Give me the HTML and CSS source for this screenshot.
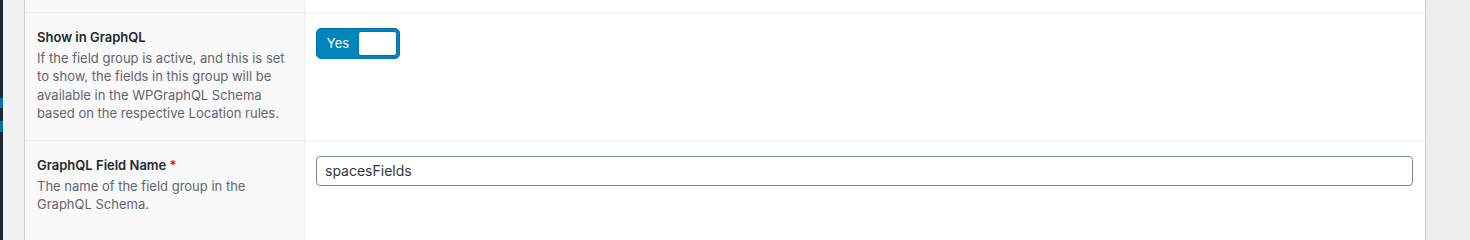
FILE: index.html
```html
<!DOCTYPE html>
<html lang="en">
<head>
<meta charset="utf-8">
<title>Field group settings</title>
<link rel="stylesheet" href="styles.css">
</head>
<body>
<div class="page">
  <div class="adminmenu">
    <div class="seg dark s1"></div>
    <div class="seg blue s2"></div>
    <div class="seg dark s3"></div>
    <div class="seg blue s4"></div>
    <div class="seg dark s5"></div>
  </div>
  <div class="gutter"></div>
  <div class="postbox">
    <div class="row row-partial">
      <div class="label-col"></div>
      <div class="field-col"></div>
    </div>
    <div class="row">
      <div class="label-col">
        <label class="label">Show in GraphQL</label>
        <p class="description">If the field group is active, and this is set to show, the fields in this group will be available in the WPGraphQL Schema based on the respective Location rules.</p>
      </div>
      <div class="field-col">
        <div class="switch">
          <span class="switch-on">Yes</span>
          <span class="switch-off">No</span>
          <div class="switch-slider"></div>
        </div>
      </div>
    </div>
    <div class="row row-last">
      <div class="label-col">
        <label class="label">GraphQL Field Name <span class="required">*</span></label>
        <p class="description">The name of the field group in the GraphQL Schema.</p>
      </div>
      <div class="field-col">
        <input class="text-input" type="text" value="spacesFields">
      </div>
    </div>
  </div>
  <div class="rightside"></div>
</div>
</body>
</html>
```

FILE: styles.css
```css
html, body {
  margin: 0;
  padding: 0;
}
body {
  background: #f1f1f1;
  font-family: Inter, "Liberation Sans", sans-serif;
  font-size: 13px;
  line-height: 1.4;
  color: #23282d;
  overflow: hidden;
}
.page {
  display: flex;
  height: 100vh;
  min-height: 224px;
  overflow: hidden;
}
.adminmenu {
  width: 3px;
  display: flex;
  flex-direction: column;
  flex-shrink: 0;
}
.seg.dark { background: #23282d; }
.seg.blue { background: #0073aa; }
.s1 { height: 98px; }
.s2 { height: 10px; }
.s3 { height: 13px; }
.s4 { height: 11px; }
.s5 { flex: 1; }
.gutter {
  width: 21px;
  flex-shrink: 0;
}
.postbox {
  width: 1400px;
  flex-shrink: 0;
  background: #fff;
  border-left: 1px solid #ccd0d4;
  border-right: 1px solid #ccd0d4;
  display: flex;
  flex-direction: column;
  overflow: hidden;
}
.rightside {
  flex: 1;
  background: #eeeeee;
}
.row {
  display: flex;
  flex-shrink: 0;
  border-top: 1px solid #eeeeee;
}
.row-partial {
  border-top: 0;
  height: 12px;
}
.row-last {
  flex: 1 0 auto;
}
.label-col {
  width: 280px;
  box-sizing: border-box;
  flex-shrink: 0;
  background: #f9f9f9;
  border-right: 1px solid #eeeeee;
  padding: 15px 12px 18px 12px;
}
.row-partial .label-col {
  padding: 0;
}
.field-col {
  flex: 1;
  padding: 15px 12px 15px 11px;
}
.row-partial .field-col {
  padding: 0;
}
.label {
  display: block;
  font-weight: 600;
  margin: 0 0 3px;
  color: #23282d;
}
.required {
  color: #f00;
}
.description {
  margin: 0;
  color: #5f6670;
}
.switch {
  position: relative;
  display: inline-flex;
  box-sizing: border-box;
  width: 84px;
  height: 31px;
  background: #0085ba;
  border: 1px solid #0073aa;
  border-radius: 5px;
  color: #fff;
}
.switch-on, .switch-off {
  width: 41px;
  box-sizing: border-box;
  text-align: center;
  line-height: 29px;
  font-size: 13px;
}
.switch-on {
  padding-left: 1px;
}
.switch-slider {
  position: absolute;
  top: 2px;
  bottom: 2px;
  left: 41px;
  right: 2px;
  background: #fff;
  border: 1px solid #0073aa;
  border-radius: 3px;
}
.text-input {
  display: block;
  width: 100%;
  box-sizing: border-box;
  height: 30px;
  margin: 0;
  padding: 0 8px;
  border: 1px solid #7e8993;
  border-radius: 4px;
  background: #fff;
  color: #32373c;
  font-family: Inter, "Liberation Sans", sans-serif;
  font-size: 14px;
  outline: none;
}
```
